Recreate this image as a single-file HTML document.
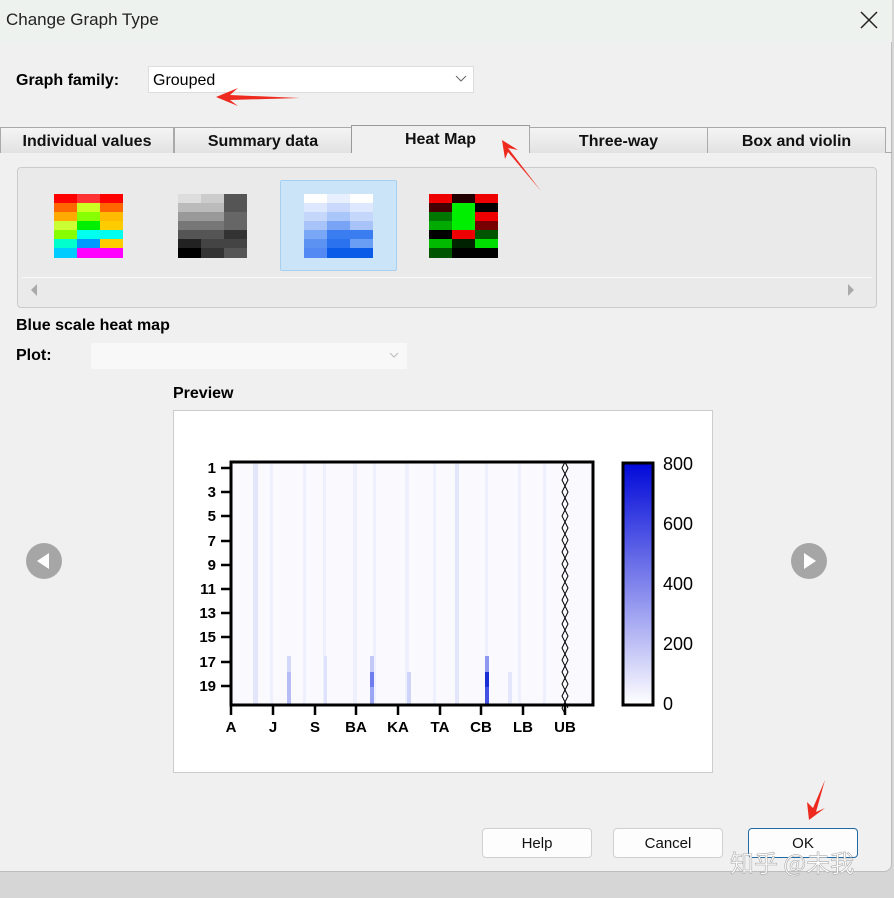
<!DOCTYPE html>
<html><head><meta charset="utf-8"><style>
*{margin:0;padding:0;box-sizing:border-box}
body{width:894px;height:898px;background:#d6d6d6;font-family:"Liberation Sans",sans-serif;position:relative;overflow:hidden}
.dlg{position:absolute;left:0;top:0;width:892px;height:872px;background:#f0f0f0;border-radius:0 0 8px 0;border-right:1px solid #bdbdbd;border-bottom:1px solid #bdbdbd}
.a{position:absolute}
.tab{position:absolute;top:127px;height:26px;background:linear-gradient(#f4f4f4,#e2e2e2);border:1px solid #aaa;border-bottom:none;font-weight:bold;font-size:16px;text-align:center;line-height:28px;color:#111}
.btn{position:absolute;top:828px;height:30px;width:110px;background:#fdfdfd;border:1px solid #d0d0d0;border-radius:4px;text-align:center;line-height:29px;font-size:15px;color:#111}
.yl{position:absolute;right:0;font-weight:bold;font-size:15px}
.xl{position:absolute;top:719px;font-weight:bold;font-size:15px;transform:translateX(-50%)}
</style></head><body>
<div class="dlg">
<div class="a" style="left:0;top:0;width:892px;height:42px;background:#eef2ee"></div>
<div class="a" style="left:6px;top:10px;font-size:17px;color:#222">Change Graph Type</div>
<svg class="a" style="left:860px;top:11px" width="18" height="18"><path d="M1 1L17 17M17 1L1 17" stroke="#222" stroke-width="1.5"/></svg>
<div class="a" style="left:16px;top:72px;font-weight:bold;font-size:16px">Graph family:</div>
<div class="a" style="left:148px;top:66px;width:326px;height:27px;background:#fff;border:1px solid #ddd;font-size:16px;padding:5px 0 0 4px">Grouped</div>
<svg class="a" style="left:455px;top:75px" width="12" height="8"><path d="M1 1L6 6L11 1" stroke="#666" fill="none"/></svg>
<div class="a" style="left:0;top:152px;width:892px;height:1px;background:#aaa"></div>
<div class="tab" style="left:0;width:174px">Individual values</div>
<div class="tab" style="left:174px;width:178px">Summary data</div>
<div class="tab" style="left:351px;top:125px;height:28px;width:179px;background:#f0f0f0;border-color:#999">Heat Map</div>
<div class="tab" style="left:529px;width:179px">Three-way</div>
<div class="tab" style="left:707px;width:179px">Box and violin</div>
<div class="a" style="left:352px;top:152px;width:177px;height:2px;background:#f0f0f0"></div>
<div class="a" style="left:17px;top:167px;width:860px;height:141px;background:#eaeaea;border:1px solid #ccc;border-radius:4px"></div>
<div class="a" style="left:22px;top:277px;width:850px;height:1px;background:#fafafa"></div>
<svg class="a" style="left:30px;top:284px" width="8" height="12"><path d="M7 0L1 6L7 12Z" fill="#aaa"/></svg>
<svg class="a" style="left:847px;top:284px" width="8" height="12"><path d="M1 0L7 6L1 12Z" fill="#aaa"/></svg>
<div class="a" style="left:280px;top:180px;width:117px;height:91px;background:#cce4f7;border:1px solid #a6d0f2;border-radius:2px"></div>
<svg class="a" style="left:54px;top:194px" width="445" height="64">
<g transform="translate(0,0)">
<rect x="0" y="0" width="23" height="9" fill="#f00"/><rect x="23" y="0" width="23" height="9" fill="#f33"/><rect x="46" y="0" width="23" height="9" fill="#f00"/>
<rect x="0" y="9" width="23" height="9" fill="#f60"/><rect x="23" y="9" width="23" height="9" fill="#cf2"/><rect x="46" y="9" width="23" height="9" fill="#f60"/>
<rect x="0" y="18" width="23" height="9" fill="#fa0"/><rect x="23" y="18" width="23" height="9" fill="#8f0"/><rect x="46" y="18" width="23" height="9" fill="#fb0"/>
<rect x="0" y="27" width="23" height="9" fill="#cf3"/><rect x="23" y="27" width="23" height="9" fill="#0e0"/><rect x="46" y="27" width="23" height="9" fill="#fc0"/>
<rect x="0" y="36" width="23" height="9" fill="#8f0"/><rect x="23" y="36" width="46" height="9" fill="#0fe"/>
<rect x="0" y="45" width="23" height="9" fill="#0fc"/><rect x="23" y="45" width="23" height="9" fill="#09f"/><rect x="46" y="45" width="23" height="9" fill="#fc0"/>
<rect x="0" y="54" width="23" height="10" fill="#0cf"/><rect x="23" y="54" width="46" height="10" fill="#f0f"/></g>
<g transform="translate(124,0)">
<rect x="0" y="0" width="23" height="9" fill="#ddd"/><rect x="23" y="0" width="23" height="9" fill="#ccc"/><rect x="46" y="0" width="23" height="18" fill="#555"/>
<rect x="0" y="9" width="46" height="9" fill="#bbb"/><rect x="0" y="18" width="46" height="9" fill="#999"/><rect x="46" y="18" width="23" height="18" fill="#666"/>
<rect x="0" y="27" width="46" height="9" fill="#777"/><rect x="0" y="36" width="46" height="9" fill="#555"/><rect x="46" y="36" width="23" height="9" fill="#333"/>
<rect x="0" y="45" width="23" height="9" fill="#222"/><rect x="23" y="45" width="46" height="9" fill="#444"/>
<rect x="0" y="54" width="23" height="10" fill="#000"/><rect x="23" y="54" width="23" height="10" fill="#333"/><rect x="46" y="54" width="23" height="10" fill="#555"/></g>
<g transform="translate(250,0)">
<rect x="0" y="0" width="69" height="9" fill="#fff"/><rect x="23" y="0" width="23" height="9" fill="#e8efff"/>
<rect x="0" y="9" width="69" height="9" fill="#dde8ff"/><rect x="23" y="9" width="23" height="9" fill="#cad9fb"/>
<rect x="0" y="18" width="69" height="9" fill="#c5d7fb"/><rect x="23" y="18" width="23" height="9" fill="#a9c6fa"/>
<rect x="0" y="27" width="69" height="9" fill="#a8c3f8"/><rect x="23" y="27" width="23" height="9" fill="#79a4f5"/>
<rect x="0" y="36" width="23" height="9" fill="#7aa6f6"/><rect x="23" y="36" width="46" height="9" fill="#3a7df0"/>
<rect x="0" y="45" width="23" height="9" fill="#5c93f3"/><rect x="23" y="45" width="23" height="9" fill="#2b72ee"/><rect x="46" y="45" width="23" height="9" fill="#6a9ef5"/>
<rect x="0" y="54" width="23" height="10" fill="#5289f2"/><rect x="23" y="54" width="46" height="10" fill="#0a5ce8"/></g>
<g transform="translate(375,0)">
<rect x="0" y="0" width="23" height="9" fill="#e00"/><rect x="23" y="0" width="23" height="9" fill="#200"/><rect x="46" y="0" width="23" height="9" fill="#e00"/>
<rect x="0" y="9" width="23" height="9" fill="#400"/><rect x="23" y="9" width="23" height="27" fill="#0e0"/><rect x="46" y="9" width="23" height="9" fill="#000"/>
<rect x="0" y="18" width="23" height="9" fill="#070"/><rect x="46" y="18" width="23" height="9" fill="#e00"/>
<rect x="0" y="27" width="23" height="9" fill="#0a0"/><rect x="46" y="27" width="23" height="9" fill="#700"/>
<rect x="0" y="36" width="23" height="9" fill="#000"/><rect x="23" y="36" width="23" height="9" fill="#e00"/><rect x="46" y="36" width="23" height="9" fill="#050"/>
<rect x="0" y="45" width="23" height="9" fill="#0b0"/><rect x="23" y="45" width="23" height="9" fill="#020"/><rect x="46" y="45" width="23" height="9" fill="#0d0"/>
<rect x="0" y="54" width="23" height="10" fill="#050"/><rect x="23" y="54" width="46" height="10" fill="#000"/></g>
</svg>
<div class="a" style="left:16px;top:317px;font-weight:bold;font-size:16px">Blue scale heat map</div>
<div class="a" style="left:16px;top:347px;font-weight:bold;font-size:16px">Plot:</div>
<div class="a" style="left:91px;top:343px;width:316px;height:26px;background:#f8f8f8"></div>
<svg class="a" style="left:389px;top:352px" width="10" height="7"><path d="M1 1L5 5L9 1" stroke="#bbb" fill="none"/></svg>
<div class="a" style="left:173px;top:385px;font-weight:bold;font-size:16px">Preview</div>
<div class="a" style="left:173px;top:410px;width:540px;height:363px;background:#fff;border:1px solid #ccc"></div>
<svg class="a" style="left:173px;top:410px" width="540" height="363">
<rect x="58" y="52" width="362" height="243" fill="#f9f9fe"/>
<g fill="#e3e6fb"><rect x="80" y="52" width="5" height="243"/><rect x="282" y="52" width="4" height="243"/></g>
<g fill="#eef0fd"><rect x="180" y="52" width="4" height="243"/><rect x="232" y="52" width="4" height="243"/><rect x="97" y="52" width="3" height="243"/><rect x="150" y="52" width="3" height="243"/><rect x="200" y="52" width="3" height="243"/><rect x="312" y="52" width="3" height="243"/><rect x="345" y="52" width="3" height="243"/><rect x="370" y="52" width="3" height="243"/><rect x="130" y="52" width="3" height="243"/><rect x="260" y="52" width="3" height="243"/></g>
<rect x="114" y="246" width="4" height="49" fill="#d4d8fa"/><rect x="114" y="262" width="4" height="33" fill="#b6bdf6"/>
<rect x="151" y="246" width="3" height="49" fill="#dfe2fb"/>
<rect x="197" y="246" width="4" height="49" fill="#c3c9f7"/><rect x="197" y="262" width="4" height="15" fill="#6e7ced"/><rect x="197" y="277" width="4" height="18" fill="#9aa5f3"/>
<rect x="234" y="262" width="4" height="33" fill="#cfd4f9"/>
<rect x="312" y="246" width="4" height="49" fill="#8d98f1"/><rect x="312" y="262" width="4" height="15" fill="#1a2fd6"/><rect x="312" y="277" width="4" height="18" fill="#4453e3"/>
<rect x="335" y="262" width="4" height="33" fill="#e4e7fc"/>
<path d="M392 52 l-3 6 l3 6 l-3 6 l3 6 l-3 6 l3 6 l-3 6 l3 6 l-3 6 l3 6 l-3 6 l3 6 l-3 6 l3 6 l-3 6 l3 6 l-3 6 l3 6 l-3 6 l3 6 l-3 6 l3 6 l-3 6 l3 6 l-3 6 l3 6 l-3 6 l3 6 l-3 6 l3 6 l-3 6 l3 6 l-3 6 l3 6 l-3 6 l3 6 l-3 6 l3 6 l-3 6 l3 6 l-3 6 l3 6 M392 52 l3 6 l-3 6 l3 6 l-3 6 l3 6 l-3 6 l3 6 l-3 6 l3 6 l-3 6 l3 6 l-3 6 l3 6 l-3 6 l3 6 l-3 6 l3 6 l-3 6 l3 6 l-3 6 l3 6 l-3 6 l3 6 l-3 6 l3 6 l-3 6 l3 6 l-3 6 l3 6 l-3 6 l3 6 l-3 6 l3 6 l-3 6 l3 6 l-3 6 l3 6 l-3 6 l3 6 l-3 6 l3 6" stroke="#000" fill="none" stroke-width="1"/>
<rect x="58" y="52" width="362" height="243" fill="none" stroke="#000" stroke-width="3"/>
<g stroke="#000" stroke-width="2.5">
<path d="M48 58h10M48 82h10M48 106h10M48 131h10M48 155h10M48 179h10M48 203h10M48 227h10M48 252h10M48 276h10"/>
<path d="M58 295v10M100 295v10M142 295v10M183 295v10M225 295v10M267 295v10M308 295v10M350 295v10M392 295v10"/>
<path d="M450 113h5M475 113h5M450 173h5M475 173h5M450 233h5M475 233h5"/>
</g>
<defs><linearGradient id="g" x1="0" y1="1" x2="0" y2="0"><stop offset="0" stop-color="#fff"/><stop offset="1" stop-color="#0008d8"/></linearGradient></defs>
<rect x="450" y="53" width="30" height="242" fill="url(#g)" stroke="#000" stroke-width="3"/>
<g font-size="18" font-family="Liberation Sans" fill="#000"><text x="490" y="60">800</text><text x="490" y="120">600</text><text x="490" y="180">400</text><text x="490" y="240">200</text><text x="490" y="300">0</text></g>
</svg>
<div class="a" style="left:173px;top:410px;width:540px;height:363px">
<div style="position:absolute;left:0;top:50px;width:43px;height:250px">
<div class="yl" style="top:0">1</div><div class="yl" style="top:24px">3</div><div class="yl" style="top:48px">5</div><div class="yl" style="top:73px">7</div><div class="yl" style="top:97px">9</div><div class="yl" style="top:121px">11</div><div class="yl" style="top:145px">13</div><div class="yl" style="top:169px">15</div><div class="yl" style="top:194px">17</div><div class="yl" style="top:218px">19</div></div>
</div>
<div class="xl" style="left:231px">A</div><div class="xl" style="left:273px">J</div><div class="xl" style="left:315px">S</div><div class="xl" style="left:356px">BA</div><div class="xl" style="left:398px">KA</div><div class="xl" style="left:440px">TA</div><div class="xl" style="left:481px">CB</div><div class="xl" style="left:523px">LB</div><div class="xl" style="left:565px">UB</div>
<svg class="a" style="left:26px;top:543px" width="38" height="38"><circle cx="18" cy="18" r="18" fill="#a6a6a6"/><path d="M23 10L11 18L23 26Z" fill="#fff"/></svg>
<svg class="a" style="left:791px;top:543px" width="38" height="38"><circle cx="18" cy="18" r="18" fill="#a6a6a6"/><path d="M13 10L25 18L13 26Z" fill="#fff"/></svg>
<div class="btn" style="left:482px">Help</div>
<div class="btn" style="left:613px">Cancel</div>
<div class="btn" style="left:748px;border-color:#1f6aa5">OK</div>
</div>
<div class="a" style="left:730px;top:844px;font-family:'Noto Sans CJK SC',sans-serif;font-size:24px;color:#fff;-webkit-text-stroke:0.6px #aaa">知乎 @未我</div>
<svg class="a" style="left:0;top:0" width="894" height="898">
<g fill="#ee2a1e">
<path d="M300 98L230 95L238 88L216 97L238 106L230 100Z"/>
<path d="M541 191L508 148L518 150L502 140L505 159L508 152Z"/>
<path d="M825 780L816 812L825 808L809 820L807 802L813 808Z"/>
</g></svg>
</body></html>
